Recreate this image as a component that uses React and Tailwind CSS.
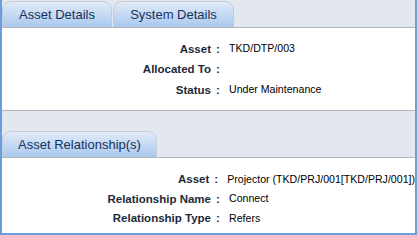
const ASSET_ROWS = [
  { label: "Asset", value: "TKD/DTP/003" },
  { label: "Allocated To", value: "" },
  { label: "Status", value: "Under Maintenance" },
];

const REL_ROWS = [
  { label: "Asset", value: "Projector (TKD/PRJ/001[TKD/PRJ/001])" },
  { label: "Relationship Name", value: "Connect" },
  { label: "Relationship Type", value: "Refers" },
];

function Tab({ children, className = "" }) {
  return (
    <div
      className={`h-[26px] flex items-center justify-center rounded-t-[9px] border border-b-0 border-[#c3ccd6] bg-gradient-to-b from-[#e2ebf7] to-[#a9c8ee] text-[13px] text-[#17315e] ${className}`}
    >
      {children}
    </div>
  );
}

function Rows({ rows, rowH }) {
  return (
    <div className="flex flex-col">
      {rows.map(r => (
        <div key={r.label} className={`flex items-center ${rowH}`}>
          <div className="w-[209px] text-right font-bold text-[11.5px] text-[#1c2a3a]">{r.label}</div>
          <div className="w-[14px] text-center font-bold text-[11.5px] text-[#1c2a3a]">:</div>
          <div className="pl-[4px] text-[10.6px] text-black whitespace-nowrap">{r.value}</div>
        </div>
      ))}
    </div>
  );
}

export default function App() {
  return (
    <div className="w-[417px] h-[235px] bg-[#e3e8f0] border-l-2 border-r-2 border-b-2 border-[#6a9de0] overflow-hidden flex flex-col" style={{ fontFamily: '"Liberation Sans", Arial, sans-serif' }}>
      {/* top tabs */}
      <div className="h-[28px] pt-[2px] flex items-end gap-[1px] border-b border-[#b4b8bc]">
        <Tab className="w-[110px]">Asset Details</Tab>
        <Tab className="w-[121px]">System Details</Tab>
      </div>
      <div className="bg-white pt-[11px] h-[83px] border-b border-[#b4b8bc]">
        <Rows rows={ASSET_ROWS} rowH="h-[20.5px]" />
      </div>

      {/* relationship tabs */}
      <div className="h-[47px] flex items-end border-b border-[#b4b8bc]">
        <Tab className="w-[155px]">Asset Relationship(s)</Tab>
      </div>
      <div className="bg-white pt-[12px] flex-1">
        <Rows rows={REL_ROWS} rowH="h-[19.5px]" />
      </div>
    </div>
  );
}
